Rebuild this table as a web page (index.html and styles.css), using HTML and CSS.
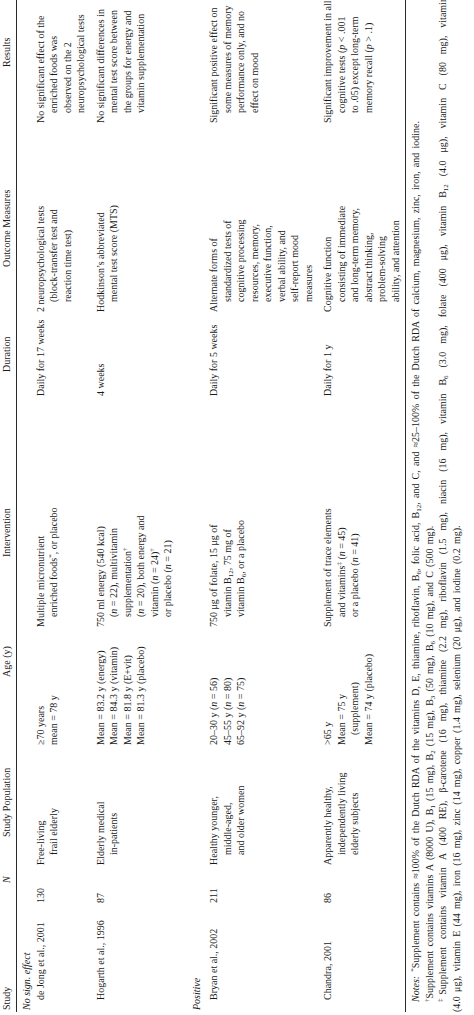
FILE: index.html
```html
<!DOCTYPE html>
<html lang="en">
<head>
<meta charset="utf-8">
<title>Table</title>
<link rel="stylesheet" href="styles.css">
</head>
<body>
<div class="page">
  <div class="table">
    <div class="thead grid">
      <div class="hc hc-study">Study</div>
      <div class="hc hc-n"><i>N</i></div>
      <div class="hc hc-pop">Study Population</div>
      <div class="hc hc-age">Age (y)</div>
      <div class="hc hc-int">Intervention</div>
      <div class="hc hc-dur">Duration</div>
      <div class="hc hc-out">Outcome Measures</div>
      <div class="hc hc-res">Results</div>
    </div>
    <div class="rule rule-top"></div>

    <div class="group g1">No sign. effect</div>

    <div class="row grid r1">
      <div class="c study">de Jong et al., 2001</div>
      <div class="c num">130</div>
      <div class="c h">Free-living<br>frail elderly</div>
      <div class="c"><div class="h">≥70 years</div><div class="h">mean = 78 y</div></div>
      <div class="c h">Multiple micronutrient<br>enriched foods<span class="sup">*</span>, or placebo</div>
      <div class="c h">Daily for 17 weeks</div>
      <div class="c h">2 neuropsychological tests<br>(block-transfer test and<br>reaction time test)</div>
      <div class="c h">No significant effect of the<br>enriched foods was<br>observed on the 2<br>neuropsychological tests</div>
    </div>

    <div class="row grid r2">
      <div class="c study">Hogarth et al., 1996</div>
      <div class="c num">87</div>
      <div class="c h">Elderly medical<br>in-patients</div>
      <div class="c">
        <div class="h">Mean = 83.2 y (energy)</div>
        <div class="h">Mean = 84.3 y (vitamin)</div>
        <div class="h">Mean = 81.8 y (E+vit)</div>
        <div class="h">Mean = 81.3 y (placebo)</div>
      </div>
      <div class="c h">750 ml energy (540 kcal)<br>(<i>n</i> = 22), multivitamin<br>supplementation<span class="sup">†</span><br>(<i>n</i> = 20), both energy and<br>vitamin (<i>n</i> = 24)<span class="sup">†</span><br>or placebo (<i>n</i> = 21)</div>
      <div class="c h">4 weeks</div>
      <div class="c h">Hodkinson’s abbreviated<br>mental test score (MTS)</div>
      <div class="c h">No significant differences in<br>mental test score between<br>the groups for energy and<br>vitamin supplementation</div>
    </div>

    <div class="group g2">Positive</div>

    <div class="row grid r3">
      <div class="c study">Bryan et al., 2002</div>
      <div class="c num">211</div>
      <div class="c h">Healthy younger,<br>middle-aged,<br>and older women</div>
      <div class="c">
        <div class="h">20–30 y (<i>n</i> = 56)</div>
        <div class="h">45–55 y (<i>n</i> = 80)</div>
        <div class="h">65–92 y (<i>n</i> = 75)</div>
      </div>
      <div class="c h">750 μg of folate, 15 μg of<br>vitamin B<span class="sub">12</span>, 75 mg of<br>vitamin B<span class="sub">6</span>, or a placebo</div>
      <div class="c h">Daily for 5 weeks</div>
      <div class="c h">Alternate forms of<br>standardized tests of<br>cognitive processing<br>resources, memory,<br>executive function,<br>verbal ability, and<br>self-report mood<br>measures</div>
      <div class="c h">Significant positive effect on<br>some measures of memory<br>performance only, and no<br>effect on mood</div>
    </div>

    <div class="row grid r4">
      <div class="c study">Chandra, 2001</div>
      <div class="c num">86</div>
      <div class="c h">Apparently healthy,<br>independently living<br>elderly subjects</div>
      <div class="c">
        <div class="h">&gt;65 y</div>
        <div class="h">Mean = 75 y<br>(supplement)</div>
        <div class="h">Mean = 74 y (placebo)</div>
      </div>
      <div class="c h">Supplement of trace elements<br>and vitamins<span class="sup">‡</span> (<i>n</i> = 45)<br>or a placebo (<i>n</i> = 41)</div>
      <div class="c h">Daily for 1 y</div>
      <div class="c h">Cognitive function<br>consisting of immediate<br>and long-term memory,<br>abstract thinking,<br>problem-solving<br>ability, and attention</div>
      <div class="c h">Significant improvement in all<br>cognitive tests (<i>p</i> &lt; .001<br>to .05) except long-term<br>memory recall (<i>p</i> &gt; .1)</div>
    </div>

    <div class="rule rule-bottom"></div>

    <div class="notes">
      <div class="note"><i>Notes:</i> <span class="sup">*</span>Supplement contains ≈100% of the Dutch RDA of the vitamins D, E, thiamine, riboflavin, B<span class="sub">6</span>, folic acid, B<span class="sub">12</span>, and C, and ≈25–100% of the Dutch RDA of calcium, magnesium, zinc, iron, and iodine.</div>
      <div class="note"><span class="sup">†</span>Supplement contains vitamins A (8000 U), B<span class="sub">1</span> (15 mg), B<span class="sub">2</span> (15 mg), B<span class="sub">3</span> (50 mg), B<span class="sub">6</span> (10 mg), and C (500 mg).</div>
      <div class="note just"><span class="sup">‡</span>Supplement contains vitamin A (400 RE), β-carotene (16 mg), thiamine (2.2 mg), riboflavin (1.5 mg), niacin (16 mg), vitamin B<span class="sub">6</span> (3.0 mg), folate (400 μg), vitamin B<span class="sub">12</span> (4.0 μg), vitamin C (80 mg), vitamin D</div>
      <div class="note-cont">(4.0 μg), vitamin E (44 mg), iron (16 mg), zinc (14 mg), copper (1.4 mg), selenium (20 μg), and iodine (0.2 mg).</div>
    </div>
  </div>
</div>
</body>
</html>
```

FILE: styles.css
```css
html, body {
  margin: 0;
  padding: 0;
  background: #ffffff;
}

body {
  width: 474px;
  height: 1015px;
  overflow: hidden;
}

.page {
  width: 474px;
  height: 1015px;
  overflow: hidden;
}

.table {
  width: 1030px;
  height: 474px;
  transform-origin: 0 0;
  transform: translateY(1015px) rotate(-90deg);
  font-family: "Liberation Serif", "Times New Roman", serif;
  font-size: 10px;
  line-height: 13.5px;
  color: #1a1a1a;
}

.grid {
  display: grid;
  grid-template-columns: 105px 42px 120px 118px 231px 84px 189px 141px;
}

.thead {
  margin-top: -3px;
  white-space: nowrap;
}

.hc-study { padding-left: 2px; }
.hc-n { padding-left: 24px; }
.hc-pop { padding-left: 28px; }
.hc-age { padding-left: 68px; }
.hc-int { padding-left: 70px; }
.hc-dur { padding-left: 24px; }
.hc-out { padding-left: 45px; }
.hc-res { padding-left: 56px; }

.rule {
  height: 1px;
  background: #2a2a2a;
}

.rule-top { margin-top: 2px; }
.rule-bottom { margin-top: 3px; }

.group {
  font-style: italic;
  padding-left: 2px;
}

.g1 { margin-top: 3.75px; }
.g2 { margin-top: 15px; }

.r2 { margin-top: 6px; }
.r3 { margin-top: 4px; }
.r4 { margin-top: 6px; }

.c {
  white-space: nowrap;
}

.study { padding-left: 12px; }
.num { padding-left: 4px; }

.h {
  padding-left: 10px;
  text-indent: -10px;
}

.sup {
  font-size: 7px;
  line-height: 0;
  vertical-align: 4px;
}

.sub {
  font-size: 7px;
  line-height: 0;
  vertical-align: -2px;
}

.notes {
  margin-top: 3px;
  word-spacing: 1.7px;
}

.note {
  text-indent: 10px;
  white-space: nowrap;
}

.note.just {
  text-align: justify;
  text-align-last: justify;
}

.note-cont {
  white-space: nowrap;
}
```
